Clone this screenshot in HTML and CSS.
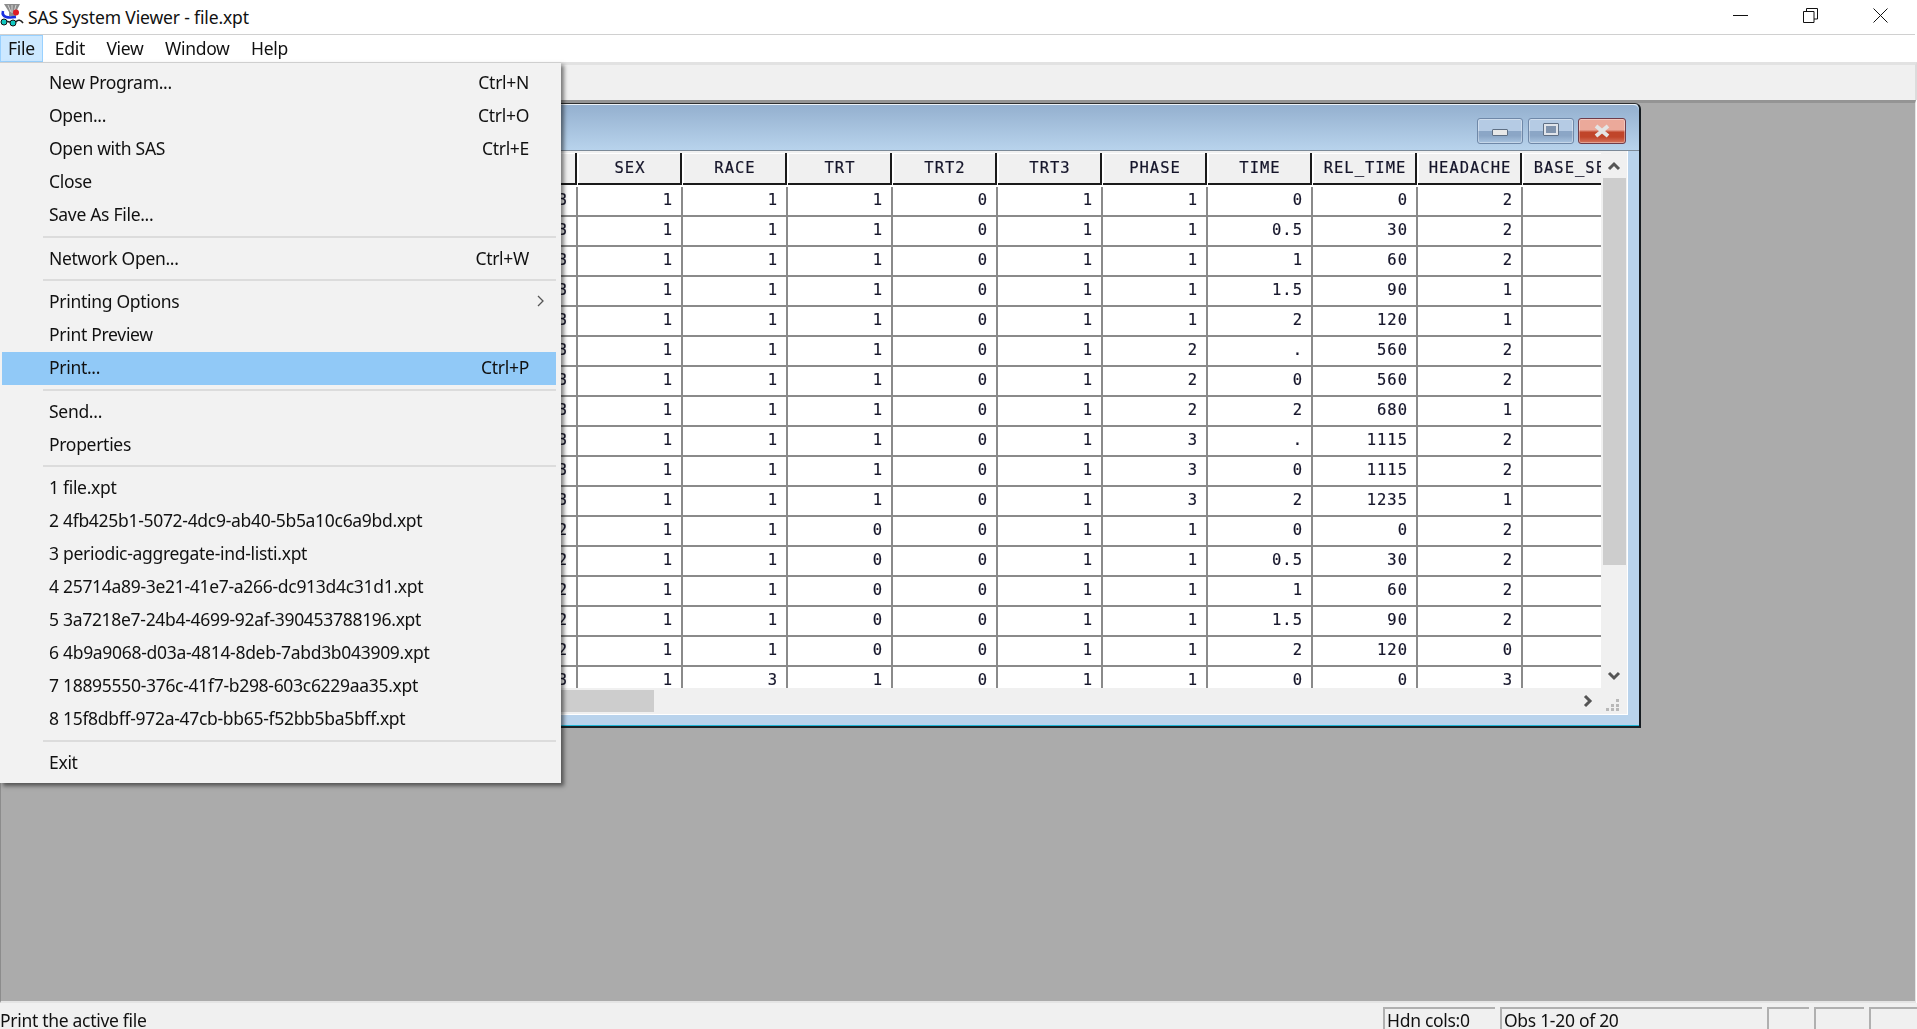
FILE: index.html
```html
<!DOCTYPE html>
<html lang="en">
<head>
<meta charset="utf-8">
<title>SAS System Viewer - file.xpt</title>
<link rel="stylesheet" href="styles.css">
</head>
<body>
<div class="app">
  <header class="titlebar">
    <svg class="appicon" width="24" height="24" viewBox="0 0 24 24">
      <path d="M4 1h16l-4 8v4H9V9z" fill="#8c8c8c"/>
      <path d="M8 2l3 7M12 2v8M16 2l-2 7" stroke="#d4d4d4" stroke-width="1"/>
      <path d="M3 8C1 15 9 15 16 14" fill="none" stroke="#1a2fe0" stroke-width="2.600"/>
      <circle cx="16" cy="9.500" r="3" fill="#e01c24"/>
      <circle cx="4" cy="19" r="3" fill="#12c8c0" stroke="#111" stroke-width="1"/>
      <circle cx="13" cy="20" r="3" fill="#12c8c0" stroke="#111" stroke-width="1"/>
      <path d="M7 18c1 1 2 1 3 1M16 19c2-3 5-2 7 1" fill="none" stroke="#222" stroke-width="1.600"/>
    </svg>
    <span class="title">SAS System Viewer - file.xpt</span>
    <div class="winctl">
      <svg width="15" height="15" viewBox="0 0 15 15"><path d="M0 7.500h15" stroke="#111"/></svg>
      <svg width="15" height="15" viewBox="0 0 15 15"><path d="M.5 3.500h10.500v11H.5zM3.500 3.500V.5h11v10.500H11" fill="none" stroke="#111"/></svg>
      <svg width="15" height="15" viewBox="0 0 15 15"><path d="M.5.500l14 14M14.500.500l-14 14" stroke="#111"/></svg>
    </div>
  </header>
  <nav class="menubar">
    <span class="menutop active">File</span>
    <span class="menutop">Edit</span>
    <span class="menutop">View</span>
    <span class="menutop">Window</span>
    <span class="menutop">Help</span>
  </nav>
  <div class="toolbar"></div>
  <main class="mdi">
    <section class="child">
      <div class="childtitle">
        <span class="cbtn"><i class="glyph-min"></i></span>
        <span class="cbtn"><i class="glyph-max"></i></span>
        <span class="cbtn close"><svg width="18" height="14" viewBox="0 0 18 14"><path d="M3 2l12 10M15 2L3 12" stroke="#e4e4e4" stroke-width="4"/></svg></span>
      </div>
      <div class="client">
        <div class="upper">
          <div class="viewport">
            <table class="grid">
              <thead>
                <tr><th></th><th>SEX</th><th>RACE</th><th>TRT</th><th>TRT2</th><th>TRT3</th><th>PHASE</th><th>TIME</th><th>REL_TIME</th><th>HEADACHE</th><th>BASE_SEX</th></tr>
              </thead>
              <tbody>
                <tr><td>3</td><td>1</td><td>1</td><td>1</td><td>0</td><td>1</td><td>1</td><td>0</td><td>0</td><td>2</td><td></td></tr>
                <tr><td>3</td><td>1</td><td>1</td><td>1</td><td>0</td><td>1</td><td>1</td><td>0.5</td><td>30</td><td>2</td><td></td></tr>
                <tr><td>3</td><td>1</td><td>1</td><td>1</td><td>0</td><td>1</td><td>1</td><td>1</td><td>60</td><td>2</td><td></td></tr>
                <tr><td>3</td><td>1</td><td>1</td><td>1</td><td>0</td><td>1</td><td>1</td><td>1.5</td><td>90</td><td>1</td><td></td></tr>
                <tr><td>3</td><td>1</td><td>1</td><td>1</td><td>0</td><td>1</td><td>1</td><td>2</td><td>120</td><td>1</td><td></td></tr>
                <tr><td>3</td><td>1</td><td>1</td><td>1</td><td>0</td><td>1</td><td>2</td><td>.</td><td>560</td><td>2</td><td></td></tr>
                <tr><td>3</td><td>1</td><td>1</td><td>1</td><td>0</td><td>1</td><td>2</td><td>0</td><td>560</td><td>2</td><td></td></tr>
                <tr><td>3</td><td>1</td><td>1</td><td>1</td><td>0</td><td>1</td><td>2</td><td>2</td><td>680</td><td>1</td><td></td></tr>
                <tr><td>3</td><td>1</td><td>1</td><td>1</td><td>0</td><td>1</td><td>3</td><td>.</td><td>1115</td><td>2</td><td></td></tr>
                <tr><td>3</td><td>1</td><td>1</td><td>1</td><td>0</td><td>1</td><td>3</td><td>0</td><td>1115</td><td>2</td><td></td></tr>
                <tr><td>3</td><td>1</td><td>1</td><td>1</td><td>0</td><td>1</td><td>3</td><td>2</td><td>1235</td><td>1</td><td></td></tr>
                <tr><td>2</td><td>1</td><td>1</td><td>0</td><td>0</td><td>1</td><td>1</td><td>0</td><td>0</td><td>2</td><td></td></tr>
                <tr><td>2</td><td>1</td><td>1</td><td>0</td><td>0</td><td>1</td><td>1</td><td>0.5</td><td>30</td><td>2</td><td></td></tr>
                <tr><td>2</td><td>1</td><td>1</td><td>0</td><td>0</td><td>1</td><td>1</td><td>1</td><td>60</td><td>2</td><td></td></tr>
                <tr><td>2</td><td>1</td><td>1</td><td>0</td><td>0</td><td>1</td><td>1</td><td>1.5</td><td>90</td><td>2</td><td></td></tr>
                <tr><td>2</td><td>1</td><td>1</td><td>0</td><td>0</td><td>1</td><td>1</td><td>2</td><td>120</td><td>0</td><td></td></tr>
                <tr><td>3</td><td>1</td><td>3</td><td>1</td><td>0</td><td>1</td><td>1</td><td>0</td><td>0</td><td>3</td><td></td></tr>
              </tbody>
            </table>
          </div>
          <div class="vscroll">
            <svg class="arrow-up" width="14" height="10" viewBox="0 0 14 10"><path d="M2 8l5-5 5 5" fill="none" stroke="#555" stroke-width="3"/></svg>
            <div class="vthumb"></div>
            <svg class="arrow-down" width="14" height="10" viewBox="0 0 14 10"><path d="M2 2l5 5 5-5" fill="none" stroke="#555" stroke-width="3"/></svg>
          </div>
        </div>
        <div class="hscroll">
          <div class="hthumb"></div>
          <svg class="arrow-right" width="10" height="14" viewBox="0 0 10 14"><path d="M2 2l5 5-5 5" fill="none" stroke="#555" stroke-width="3"/></svg>
          <svg class="grip" width="14" height="14" viewBox="0 0 14 14" fill="#b8b8b8"><rect x="10" y="1" width="3" height="3"/><rect x="5" y="6" width="3" height="3"/><rect x="10" y="6" width="3" height="3"/><rect x="0" y="10" width="3" height="3"/><rect x="5" y="10" width="3" height="3"/><rect x="10" y="10" width="3" height="3"/></svg>
        </div>
      </div>
    </section>
  </main>
  <footer class="status">
    <span class="statusmsg">Print the active file</span>
    <span class="panel p-hdn">Hdn cols:0</span>
    <span class="panel p-obs">Obs 1-20 of 20</span>
    <span class="panel p-a"></span>
    <span class="panel p-b"></span>
    <span class="panel p-c"></span>
  </footer>
  <div class="menu">
    <div class="item"><span>New Program...</span><span>Ctrl+N</span></div>
    <div class="item"><span>Open...</span><span>Ctrl+O</span></div>
    <div class="item"><span>Open with SAS</span><span>Ctrl+E</span></div>
    <div class="item"><span>Close</span></div>
    <div class="item"><span>Save As File...</span></div>
    <div class="sep"></div>
    <div class="item"><span>Network Open...</span><span>Ctrl+W</span></div>
    <div class="sep"></div>
    <div class="item"><span>Printing Options</span><svg class="submenu" width="7" height="12" viewBox="0 0 7 12"><path d="M1 1l5 5-5 5" fill="none" stroke="#555" stroke-width="1.300"/></svg></div>
    <div class="item"><span>Print Preview</span></div>
    <div class="item selected"><span>Print...</span><span>Ctrl+P</span></div>
    <div class="sep"></div>
    <div class="item"><span>Send...</span></div>
    <div class="item"><span>Properties</span></div>
    <div class="sep"></div>
    <div class="item"><span>1 file.xpt</span></div>
    <div class="item"><span>2 4fb425b1-5072-4dc9-ab40-5b5a10c6a9bd.xpt</span></div>
    <div class="item"><span>3 periodic-aggregate-ind-listi.xpt</span></div>
    <div class="item"><span>4 25714a89-3e21-41e7-a266-dc913d4c31d1.xpt</span></div>
    <div class="item"><span>5 3a7218e7-24b4-4699-92af-390453788196.xpt</span></div>
    <div class="item"><span>6 4b9a9068-d03a-4814-8deb-7abd3b043909.xpt</span></div>
    <div class="item"><span>7 18895550-376c-41f7-b298-603c6229aa35.xpt</span></div>
    <div class="item"><span>8 15f8dbff-972a-47cb-bb65-f52bb5ba5bff.xpt</span></div>
    <div class="sep"></div>
    <div class="item"><span>Exit</span></div>
  </div>
</div>
</body>
</html>
```
FILE: styles.css
```css
html, body {
  margin: 0;
  height: 100%;
  overflow: hidden;
  background: #fff;
}
.app {
  position: relative;
  display: flex;
  flex-direction: column;
  width: 1917px;
  height: 1029px;
  overflow: hidden;
  font-family: "Noto Sans", "Open Sans", sans-serif;
  font-size: 17.500px;
  letter-spacing: -0.300px;
  color: #111;
  filter: blur(0.45px);
}
.titlebar {
  flex: none;
  display: flex;
  align-items: center;
  height: 34px;
  box-sizing: border-box;
  background: #fff;
  margin-right: 2px;
}
.appicon { margin: 0 4px 4px 0; }
.title { letter-spacing: -0.150px; }
.winctl {
  margin-left: auto;
  margin-bottom: 3px;
  display: flex;
  align-items: center;
  gap: 55px;
  padding-right: 27px;
}
.menubar {
  flex: none;
  display: flex;
  height: 28px;
  border-top: 1px solid #d0d0d0;
  margin-right: 2px;
  box-sizing: border-box;
  background: #fff;
  align-items: stretch;
}
.menutop {
  display: flex;
  align-items: center;
  padding: 0 8px 1px;
  margin-right: 5.500px;
}
.menutop.active {
  margin-right: 4px;
  background: #cce8ff;
  box-shadow: inset 0 0 0 1px #99d1ff;
}
.toolbar {
  flex: none;
  height: 38px;
  background: #f0f0f0;
  border-top: 3px solid #e2e2e2;
  border-right: 2px solid #dcdcdc;
  box-sizing: border-box;
}
.mdi {
  flex: 1;
  position: relative;
  background: #ababab;
  border-top: 3px solid #949494;
  border-left: 1px solid #8c8c8c;
  border-right: 1px solid #e6e6e6;
  margin-right: 1px;
  border-bottom: 2px solid #e4e4e4;
}
.child {
  position: absolute;
  left: 462px;
  top: 0;
  width: 1178px;
  height: 625px;
  box-sizing: border-box;
  display: flex;
  flex-direction: column;
  background: #b9d3ec;
  border-top: 1px solid #2e2e2e;
  border-right: 2px solid #151b20;
  border-bottom: 2px solid;
  border-bottom-color: #1a2428;
  border-top-right-radius: 6px;
  padding: 1px 11px 11px 10px;
  box-shadow: inset 0 1px 0 #eef3f8, inset 0 -1px 0 #1fb5d6;
}
.childtitle {
  flex: none;
  height: 46px;
  margin: 0 -11px 0 -10px;
  padding: 13px 13px 0 0;
  box-sizing: border-box;
  display: flex;
  justify-content: flex-end;
  gap: 5px;
  background: linear-gradient(#94b0cf, #b8d3ec);
  border-bottom: 1px solid #7c8a98;
  border-top-right-radius: 6px;
}
.cbtn {
  width: 46px;
  height: 26px;
  box-sizing: border-box;
  display: flex;
  align-items: center;
  justify-content: center;
  border: 1px solid #6f88a8;
  border-radius: 3px;
  background: linear-gradient(#b5cbe4 0 48%, #8ba6c6 52% 70%, #a9c4e0);
  box-shadow: inset 0 0 0 1px rgba(255, 255, 255, .35);
}
.cbtn.close {
  width: 48px;
  margin-left: -1px;
  border-color: #6f3c4a;
  background: linear-gradient(#eba99a 0 45%, #c0452a 55% 75%, #d5755f);
}
.glyph-min {
  display: block;
  width: 16px;
  height: 7px;
  margin-top: 3px;
  box-sizing: border-box;
  background: #e8e8e8;
  border: 1px solid #5f6f84;
  border-radius: 1px;
}
.glyph-max {
  display: block;
  width: 16px;
  height: 13px;
  margin-top: -3px;
  box-sizing: border-box;
  background: #e0e4ea;
  border: 1px solid #5f6f84;
  border-radius: 1px;
  box-shadow: inset 0 0 0 2px #e0e4ea, inset 0 0 0 10px #7f93ad;
}
.client {
  flex: 1;
  display: flex;
  flex-direction: column;
  background: #f0f0f0;
  border-bottom: 1px solid #fff;
  border-right: 1px solid #fff;
  min-height: 0;
}
.upper {
  flex: none;
  height: 537px;
  display: flex;
  padding-top: 2px;
  box-sizing: border-box;
}
.viewport {
  width: 1128px;
  height: 535px;
  overflow: hidden;
  background: #fff;
}
.grid {
  border-collapse: separate;
  border-spacing: 0;
  table-layout: fixed;
  width: 1155px;
  font-family: "DejaVu Sans Mono", "Liberation Mono", monospace;
  font-size: 15.500px;
  letter-spacing: 1px;
  color: #15152a;
  -webkit-text-stroke: 0.200px #15152a;
}
.grid th {
  width: 105px;
  height: 34px;
  box-sizing: border-box;
  padding: 0 0 3px;
  font-weight: 400;
  text-align: center;
  background: #f0f0f0;
  border-right: 1px solid #fff;
  border-bottom: 2px solid #fff;
  box-shadow: inset -2px -2px 0 #1a1a1a, inset 1px 1px 0 #fff;
}
.grid td {
  height: 30px;
  box-sizing: border-box;
  padding: 0 8px 3px 0;
  text-align: right;
  background: #fff;
  border-right: 2px solid #8a8a8a;
  border-bottom: 2px solid #8a8a8a;
}
.vscroll {
  flex: 1;
  display: flex;
  flex-direction: column;
  align-items: center;
  padding-top: 8px;
  box-sizing: border-box;
}
.arrow-up { flex: none; }
.vthumb {
  flex: none;
  width: 23px;
  height: 387px;
  margin-top: 7px;
  background: #cdcdcd;
}
.arrow-down { flex: none; margin-top: 106px; }
.hscroll {
  flex: 1;
  display: flex;
  align-items: flex-start;
  padding-top: 2px;
  box-sizing: border-box;
}
.hthumb {
  width: 181px;
  height: 22px;
  background: #cdcdcd;
}
.arrow-right { margin: 4px 0 0 929px; }
.grip { margin: 8px 0 0 13px; }
.status {
  flex: none;
  height: 26px;
  display: flex;
  background: #f0f0f0;
  align-items: stretch;
}
.statusmsg {
  width: 1383px;
  flex: none;
  padding-top: 8px;
  line-height: 18px;
}
.panel {
  flex: none;
  margin-top: 4px;
  margin-right: 5px;
  padding: 3px 0 0 2px;
  box-sizing: border-box;
  border-top: 2px solid #b0b0b0;
  border-left: 2px solid #b0b0b0;
  line-height: 17px;
  white-space: nowrap;
}
.p-hdn { width: 112px; }
.p-obs { width: 262px; }
.p-a { width: 42px; }
.p-b { width: 50px; }
.p-c { width: 49px; margin-right: 0; }
.menu {
  position: absolute;
  left: 0;
  top: 62px;
  width: 561px;
  height: 721px;
  box-sizing: border-box;
  padding: 3.500px 5px 0 2px;
  background: #f2f2f2;
  border-top: 1px solid #cfcfcf;
  box-shadow: 3px 3px 4px rgba(0, 0, 0, .5);
}
.item {
  height: 33px;
  box-sizing: border-box;
  display: flex;
  align-items: center;
  justify-content: space-between;
  padding: 0 27px 2px 47px;
  white-space: nowrap;
}
.item.selected { background: #91c9f7; }
.submenu { margin-right: -15px; }
.sep {
  height: 10.500px;
  margin-left: 41px;
  background: linear-gradient(transparent 4px, #dcdcdc 4px, #dcdcdc 6px, transparent 6px);
}
```
